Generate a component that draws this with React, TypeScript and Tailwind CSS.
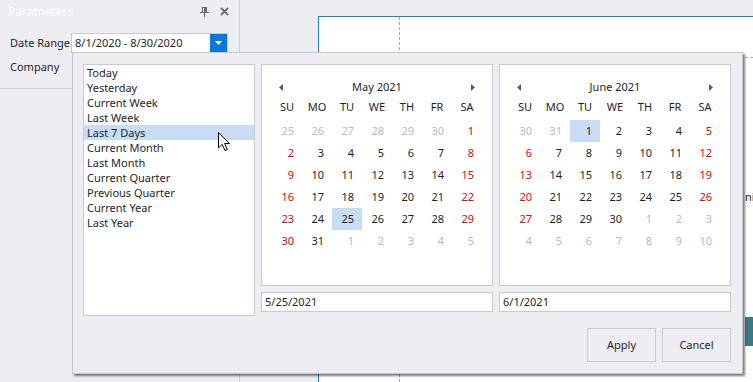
import React from 'react';

const presets = [
  'Today',
  'Yesterday',
  'Current Week',
  'Last Week',
  'Last 7 Days',
  'Current Month',
  'Last Month',
  'Current Quarter',
  'Previous Quarter',
  'Current Year',
  'Last Year',
];

const dayNames = ['SU', 'MO', 'TU', 'WE', 'TH', 'FR', 'SA'];

interface MonthProps {
  title: string;
  offset: number;
  length: number;
  prevLength: number;
  selected: number;
  value: string;
}

function Arrow({ dir }: { dir: 'left' | 'right' }) {
  return (
    <svg width="4" height="7" viewBox="0 0 4 7" className="block">
      {dir === 'left' ? (
        <path d="M4 0 L0 3.5 L4 7 Z" fill="#5a5a66" />
      ) : (
        <path d="M0 0 L4 3.5 L0 7 Z" fill="#5a5a66" />
      )}
    </svg>
  );
}

function MonthCalendar({ title, offset, length, prevLength, selected, value }: MonthProps) {
  const cells = Array.from({ length: 42 }, (_, i) => {
    const n = i - offset + 1;
    if (n < 1) return { d: prevLength + n, inMonth: false, col: i % 7 };
    if (n > length) return { d: n - length, inMonth: false, col: i % 7 };
    return { d: n, inMonth: true, col: i % 7 };
  });

  return (
    <div className="flex flex-col gap-[6px] w-[232px]">
      <div className="h-[222px] bg-white border border-[#c9c9d6] pt-[12px] px-[10px]">
        <div className="h-[20px] flex items-center justify-between px-[7px]">
          <Arrow dir="left" />
          <span className="text-[#1e1e2a]">{title}</span>
          <Arrow dir="right" />
        </div>
        <div className="grid grid-cols-7 w-[210px]">
          {dayNames.map((n) => (
            <div key={n} className="h-[20px] flex items-center justify-center text-[#1e1e2a]">
              {n}
            </div>
          ))}
        </div>
        <div className="grid grid-cols-7 w-[210px] mt-[3px]">
          {cells.map((c, i) => {
            const isSel = c.inMonth && c.d === selected;
            const color = !c.inMonth
              ? 'text-[#b9b9c0]'
              : c.col === 0 || c.col === 6
                ? 'text-[#d20a0a]'
                : 'text-[#1e1e2a]';
            return (
              <div
                key={i}
                className={`h-[22px] flex items-center justify-end pr-[8px] pt-px ${color} ${
                  isSel ? 'bg-[#c8dcf3]' : ''
                }`}
              >
                {c.d}
              </div>
            );
          })}
        </div>
      </div>
      <div className="h-[20px] bg-white border border-[#c9c9d6] pl-[3px] flex items-center text-[#1e1e2a]">
        {value}
      </div>
    </div>
  );
}

export default function App() {
  return (
    <div className="relative w-[753px] h-[382px] overflow-hidden bg-[#eeedf2] flex text-[11px] font-['Noto_Sans',sans-serif] text-[#1e1e2a]">
      {/* parameters panel */}
      <div className="w-[240px] h-full border-r border-[#cfcfda] flex flex-col">
        <div className="h-[22px] flex items-center pl-[8px] pr-[6px] pt-px">
          <span className="text-white text-[12px] flex-1">Parameters</span>
          <svg width="9" height="10" viewBox="0 0 9 10" className="mr-[11px]">
            <path d="M2 0 H7 V5 H9 V6 H0 V5 H2 Z M3 1 V5 H4 V1 Z" fill="#6b6b75" />
            <rect x="4" y="6" width="1" height="4" fill="#6b6b75" />
          </svg>
          <svg width="9" height="9" viewBox="0 0 9 9" className="mr-[4px]">
            <path d="M1 1 L8 8 M8 1 L1 8" stroke="#6b6b75" strokeWidth="1.8" />
          </svg>
        </div>
        <div className="mt-[11px] flex items-center h-[20px] pl-[10px]">
          <span className="w-[61px]">Date Range</span>
          <div className="w-[157px] h-[20px] bg-white border border-[#c9c9d6] flex items-center">
            <span className="flex-1 pl-[3px]">8/1/2020 - 8/30/2020</span>
            <div className="w-[17px] h-full bg-[#0a78d6] flex items-center justify-center">
              <svg width="7" height="4" viewBox="0 0 7 4">
                <path d="M0 0 H7 L3.5 4 Z" fill="white" />
              </svg>
            </div>
          </div>
        </div>
        <div className="mt-[4px] h-[20px] flex items-center pl-[10px]">Company</div>
        <div className="mt-[11px] border-b border-[#cfcfda]" />
      </div>

      {/* designer surface */}
      <div className="flex-1 pt-[16px] pl-[78px]">
        <div className="relative h-full bg-white border-l border-t border-[#1a7fd6] flex">
          <div className="w-[80px]" />
          <div className="flex-1 border-l border-dashed border-[#a8a8a8] pt-[40px]">
            <div className="border-t border-dashed border-[#a8a8a8]" />
          </div>
          <span className="absolute left-[426px] top-[172px] text-[#1e1e2a]">nia</span>
          <div className="absolute left-[426px] top-[300px] w-[20px] h-[29px] bg-[#3d7881]" />
        </div>
      </div>

      {/* date range dropdown */}
      <div className="absolute left-[72px] top-[52px] w-[671px] h-[322px] bg-[#eeedf2] border border-[#c6c6d2] shadow-[2px_2px_2px_rgba(0,0,0,0.5)] pt-[11px] pl-[10px] flex flex-col">
        <div className="flex gap-[6px] h-[252px]">
          <div className="w-[172px] h-full bg-white border border-[#c9c9d6]">
            {presets.map((p) => (
              <div
                key={p}
                className={`h-[15px] flex items-center pl-[3px] pt-px ${p === 'Last 7 Days' ? 'bg-[#c8dcf3]' : ''}`}
              >
                {p}
              </div>
            ))}
          </div>
          <MonthCalendar title="May 2021" offset={6} length={31} prevLength={30} selected={25} value="5/25/2021" />
          <MonthCalendar title="June 2021" offset={2} length={30} prevLength={31} selected={1} value="6/1/2021" />
        </div>
        <div className="mt-[12px] flex justify-end gap-[6px] w-[648px]">
          <button className="w-[69px] h-[34px] border border-[#c9c9d6] bg-[#eeedf2] text-[#1e1e2a]">Apply</button>
          <button className="w-[69px] h-[34px] border border-[#c9c9d6] bg-[#eeedf2] text-[#1e1e2a]">Cancel</button>
        </div>
      </div>

      {/* mouse pointer */}
      <svg width="13" height="20" viewBox="0 0 13 20" className="absolute left-[218px] top-[132px]">
        <path
          d="M0.5 0.5 L0.5 16 L4.2 12.4 L7 18.5 L9.3 17.5 L6.6 11.5 L11.5 11.5 Z"
          fill="white"
          stroke="black"
          strokeWidth="1"
          strokeLinejoin="round"
        />
      </svg>
    </div>
  );
}
